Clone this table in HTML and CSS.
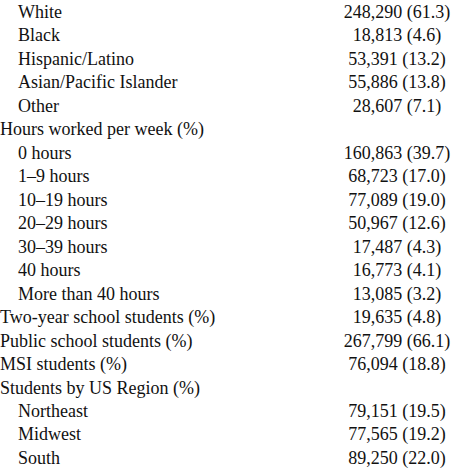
FILE: index.html
```html
<!DOCTYPE html>
<html>
<head>
<meta charset="utf-8">
<link rel="stylesheet" href="styles.css">
</head>
<body>
<div class="table">
  <div class="row"><span class="label sub">White</span><span class="val">248,290 (61.3)</span></div>
  <div class="row"><span class="label sub">Black</span><span class="val">18,813 (4.6)</span></div>
  <div class="row"><span class="label sub">Hispanic/Latino</span><span class="val">53,391 (13.2)</span></div>
  <div class="row"><span class="label sub">Asian/Pacific Islander</span><span class="val">55,886 (13.8)</span></div>
  <div class="row"><span class="label sub">Other</span><span class="val">28,607 (7.1)</span></div>
  <div class="row"><span class="label">Hours worked per week (%)</span><span class="val"></span></div>
  <div class="row"><span class="label sub">0 hours</span><span class="val">160,863 (39.7)</span></div>
  <div class="row"><span class="label sub">1–9 hours</span><span class="val">68,723 (17.0)</span></div>
  <div class="row"><span class="label sub">10–19 hours</span><span class="val">77,089 (19.0)</span></div>
  <div class="row"><span class="label sub">20–29 hours</span><span class="val">50,967 (12.6)</span></div>
  <div class="row"><span class="label sub">30–39 hours</span><span class="val">17,487 (4.3)</span></div>
  <div class="row"><span class="label sub">40 hours</span><span class="val">16,773 (4.1)</span></div>
  <div class="row"><span class="label sub">More than 40 hours</span><span class="val">13,085 (3.2)</span></div>
  <div class="row"><span class="label">Two-year school students (%)</span><span class="val">19,635 (4.8)</span></div>
  <div class="row"><span class="label">Public school students (%)</span><span class="val">267,799 (66.1)</span></div>
  <div class="row"><span class="label">MSI students (%)</span><span class="val">76,094 (18.8)</span></div>
  <div class="row"><span class="label">Students by US Region (%)</span><span class="val"></span></div>
  <div class="row"><span class="label sub">Northeast</span><span class="val">79,151 (19.5)</span></div>
  <div class="row"><span class="label sub">Midwest</span><span class="val">77,565 (19.2)</span></div>
  <div class="row"><span class="label sub">South</span><span class="val">89,250 (22.0)</span></div>
</div>
</body>
</html>
```
FILE: styles.css
```css
html, body {
  margin: 0;
  padding: 0;
  background: #ffffff;
}
.table {
  font-family: "Liberation Serif", "Times New Roman", serif;
  font-size: 18px;
  line-height: 23.47px;
  color: #111111;
  padding-top: 1px;
}
.row {
  display: grid;
  grid-template-columns: 320px 154px;
  height: 23.47px;
  white-space: nowrap;
}
.label {
  padding-left: 0;
}
.label.sub {
  padding-left: 18px;
}
.val {
  text-align: center;
}
```
